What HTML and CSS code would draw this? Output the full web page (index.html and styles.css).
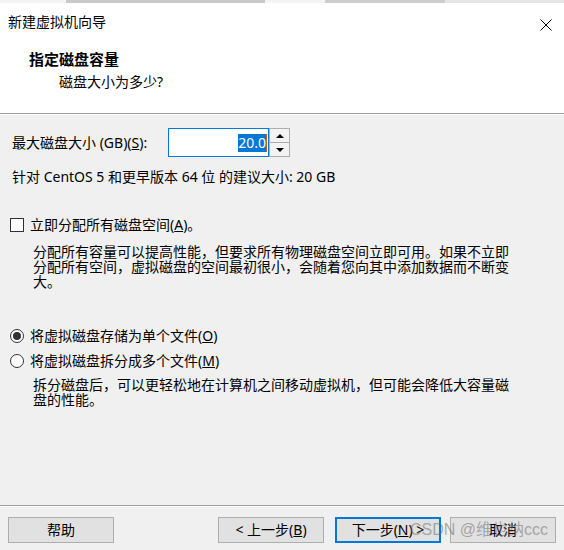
FILE: index.html
```html
<!DOCTYPE html>
<html lang="zh-CN">
<head>
<meta charset="utf-8">
<title>新建虚拟机向导</title>
<link rel="stylesheet" href="styles.css">
</head>
<body>
<div class="window">
  <div class="topstrip"></div>
  <header class="header">
    <div class="titlebar">
      <span class="title">新建虚拟机向导</span>
      <svg class="close" width="12" height="12" viewBox="0 0 12 12"><path d="M0.5 0.5 L11.5 11.5 M11.5 0.5 L0.5 11.5" stroke="#000" stroke-width="1" fill="none"/></svg>
    </div>
    <div class="heading">指定磁盘容量</div>
    <div class="subheading">磁盘大小为多少?</div>
  </header>

  <main class="content">
    <div class="size-row">
      <span class="label">最大磁盘大小 (GB)(<u>S</u>):</span>
      <div class="spin">
        <div class="spin-input"><span class="sel">20.0</span><span class="caret"></span></div>
        <div class="spin-btns">
          <div class="spin-btn"><span class="tri-up"></span></div>
          <div class="spin-btn"><span class="tri-down"></span></div>
        </div>
      </div>
    </div>
    <div class="line rec">针对 CentOS 5 和更早版本 64 位 的建议大小: 20 GB</div>

    <div class="line option opt-check">
      <span class="checkbox"></span>
      <span>立即分配所有磁盘空间(<u>A</u>)。</span>
    </div>
    <p class="desc desc1">分配所有容量可以提高性能，但要求所有物理磁盘空间立即可用。如果不立即分配所有空间，虚拟磁盘的空间最初很小，会随着您向其中添加数据而不断变大。</p>

    <div class="line option opt-radio1">
      <span class="radio checked"></span>
      <span>将虚拟磁盘存储为单个文件(<u>O</u>)</span>
    </div>
    <div class="line option opt-radio2">
      <span class="radio"></span>
      <span>将虚拟磁盘拆分成多个文件(<u>M</u>)</span>
    </div>
    <p class="desc desc2">拆分磁盘后，可以更轻松地在计算机之间移动虚拟机，但可能会降低大容量磁盘的性能。</p>
  </main>

  <footer class="footer">
    <button class="btn">帮助</button>
    <div class="spacer"></div>
    <button class="btn">&lt; 上一步(<u>B</u>)</button>
    <button class="btn default">下一步(<u>N</u>) &gt;</button>
    <button class="btn cancel">取消</button>
    <span class="watermark">CSDN @维也纳ccc</span>
  </footer>
</div>
</body>
</html>
```

FILE: styles.css
```css
html, body {
  margin: 0;
  padding: 0;
  height: 100%;
}
body {
  background: #f0f0f0;
  font-family: "Noto Sans", "Noto Sans CJK SC", sans-serif;
  font-size: 14px;
  color: #000;
}
.window {
  width: 564px;
  height: 550px;
  display: flex;
  flex-direction: column;
  overflow: hidden;
}
.topstrip {
  height: 3px;
  background: linear-gradient(to right, #f4f4f4 0, #f4f4f4 66px, #c9c9c9 66px, #c9c9c9 265px, #f4f4f4 265px, #f4f4f4 325px, #cdcdcd 325px, #cdcdcd 445px, #e6e6e6 445px, #e6e6e6 100%);
}
.header {
  background: #fff;
  height: 110px;
  border-bottom: 1px solid #a0a0a0;
  box-shadow: 0 1px 0 #fff;
  box-sizing: content-box;
}
.titlebar {
  height: 38px;
  display: flex;
  align-items: center;
  justify-content: space-between;
  padding: 0 12px 0 8px;
}
.title {
  font-size: 14px;
  line-height: 20px;
}
.close {
  display: block;
  margin-top: 6px;
}
.heading {
  padding-left: 29px;
  font-size: 15px;
  font-weight: bold;
  line-height: 20px;
  margin-top: 8px;
}
.subheading {
  padding-left: 59px;
  font-size: 14px;
  line-height: 20px;
  margin-top: 3px;
}
.content {
  flex: 1;
  padding: 14px 0 0 10px;
}
.size-row {
  display: flex;
  align-items: center;
  height: 29px;
  padding-left: 2px;
}
.label {
  width: 156px;
  line-height: 20px;
}
.spin {
  display: flex;
  height: 29px;
}
.spin-input {
  width: 98px;
  height: 27px;
  border: 1px solid #0078d7;
  background: #fff;
  display: flex;
  align-items: center;
  justify-content: flex-end;
  padding-right: 1px;
  box-sizing: content-box;
}
.sel {
  background: #0078d7;
  color: #fff;
  line-height: 18px;
  font-size: 14px;
}
.caret {
  width: 1px;
  height: 18px;
  background: #c86400;
}
.spin-btns {
  display: flex;
  flex-direction: column;
  width: 21px;
}
.spin-btn {
  flex: 1;
  border: 1px solid #adadad;
  background: #f3f3f3;
  display: flex;
  align-items: center;
  justify-content: center;
}
.spin-btn + .spin-btn {
  border-top: none;
}
.tri-up {
  width: 0;
  height: 0;
  border-left: 4px solid transparent;
  border-right: 4px solid transparent;
  border-bottom: 4px solid #000;
}
.tri-down {
  width: 0;
  height: 0;
  border-left: 4px solid transparent;
  border-right: 4px solid transparent;
  border-top: 4px solid #000;
}
.line {
  line-height: 20px;
}
.rec {
  margin-top: 10px;
  padding-left: 2px;
}
.option {
  display: flex;
  align-items: center;
  gap: 6px;
}
.opt-check {
  margin-top: 28px;
}
.checkbox {
  width: 12px;
  height: 12px;
  border: 1px solid #333;
  background: #fff;
  flex: none;
}
.radio {
  width: 12px;
  height: 12px;
  border: 1px solid #333;
  border-radius: 50%;
  background: #fff;
  flex: none;
  position: relative;
}
.radio.checked::after {
  content: "";
  position: absolute;
  left: 2px;
  top: 2px;
  width: 8px;
  height: 8px;
  border-radius: 50%;
  background: #333;
}
.desc {
  margin: 0;
  padding-left: 23px;
  padding-right: 46px;
  line-height: 15px;
}
.desc1 {
  margin-top: 9px;
}
.opt-radio1 {
  margin-top: 37px;
}
.opt-radio2 {
  margin-top: 5px;
}
.desc2 {
  margin-top: 6px;
}
.footer {
  border-top: 1px solid #a0a0a0;
  box-shadow: inset 0 1px 0 #fff;
  display: flex;
  align-items: flex-start;
  padding: 11px 8px 0 8px;
  box-sizing: border-box;
  height: 45px;
  position: relative;
}
.spacer {
  flex: 1;
}
.btn {
  width: 106px;
  height: 26px;
  border: 1px solid #adadad;
  background: #e1e1e1;
  font-family: "Noto Sans", "Noto Sans CJK SC", sans-serif;
  font-size: 14px;
  color: #000;
  padding: 0;
  line-height: 22px;
  margin-left: 10px;
}
.btn:first-child {
  margin-left: 0;
}
.btn.default {
  border: 2px solid #0078d7;
  margin-left: 11px;
}
.btn.cancel {
  margin-left: 9px;
}
.watermark {
  position: absolute;
  left: 410px;
  top: 11px;
  line-height: 26px;
  font-family: "Liberation Sans", "Noto Sans CJK SC", sans-serif;
  font-size: 16px;
  color: rgba(110, 110, 110, 0.55);
  white-space: nowrap;
}
```
